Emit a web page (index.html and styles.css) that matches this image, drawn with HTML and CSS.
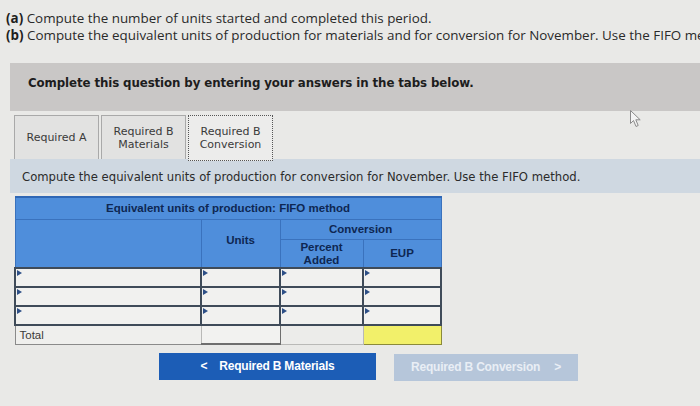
FILE: index.html
```html
<!DOCTYPE html>
<html>
<head>
<meta charset="utf-8">
<link rel="stylesheet" href="styles.css">
</head>
<body>
<div class="intro">
  <p><b>(a)</b> Compute the number of units started and completed this period.</p>
  <p><b>(b)</b> Compute the equivalent units of production for materials and for conversion for November. Use the FIFO method.</p>
</div>
<div class="panel">
  <div class="banner">Complete this question by entering your answers in the tabs below.</div>
  <div class="tabs">
    <div class="tab">Required A</div>
    <div class="tab">Required B<br>Materials</div>
    <div class="tab active">Required B<br>Conversion</div>
    <svg class="cursor" width="14" height="19" viewBox="0 0 14 19"><path d="M1.5 1.5 L1.5 14.5 L4.5 11.5 L7 17.5 L9.2 16.5 L6.8 10.8 L11.2 10.8 Z" fill="#f4f4f4" stroke="#8a8a8a" stroke-width="1"/></svg>
  </div>
  <div class="instr">Compute the equivalent units of production for conversion for November. Use the FIFO method.</div>
  <table class="eup">
    <colgroup><col class="c1"><col class="c2"><col class="c3"><col class="c4"></colgroup>
    <tr class="h1"><th colspan="4">Equivalent units of production: FIFO method</th></tr>
    <tr class="h2"><th rowspan="2"></th><th rowspan="2" class="units">Units</th><th colspan="2">Conversion</th></tr>
    <tr class="h3"><th>Percent<br>Added</th><th>EUP</th></tr>
    <tr class="row"><td class="in"></td><td class="in"></td><td class="in"></td><td class="in"></td></tr>
    <tr class="row"><td class="in"></td><td class="in"></td><td class="in"></td><td class="in"></td></tr>
    <tr class="row"><td class="in"></td><td class="in"></td><td class="in"></td><td class="in"></td></tr>
    <tr class="total"><td class="lbl">Total</td><td class="tu"></td><td class="tp"></td><td class="ty"></td></tr>
  </table>
  <div class="nav">
    <div class="btn prev"><span class="chev">&lt;</span>Required B Materials</div>
    <div class="btn next">Required B Conversion<span class="chev">&gt;</span></div>
  </div>
</div>
</body>
</html>
```

FILE: styles.css
```css
html, body { margin: 0; padding: 0; }
body {
  background: #e9e9e7;
  width: 700px;
  height: 406px;
  overflow: hidden;
  font-family: "Open Sans", "DejaVu Sans", sans-serif;
}
.intro { padding: 10px 0 0 6px; overflow: hidden; }
.intro p {
  margin: 0;
  font-size: 13.4px;
  line-height: 17px;
  color: #2a2a2a;
  white-space: nowrap;
}
.intro b { font-weight: 700; color: #1e1e1e; }
.panel { margin: 19px 0 0 10px; }
.banner {
  background: #c9c7c6;
  height: 48px;
  line-height: 40px;
  padding-left: 18px;
  font-family: "DejaVu Sans", sans-serif;
  font-weight: bold;
  font-size: 11.8px;
  color: #1d1d1d;
  letter-spacing: -0.1px;
}
.tabs {
  position: relative;
  display: flex;
  gap: 2px;
  padding: 4px 0 0 4px;
  height: 44px;
}
.tab {
  width: 83px;
  height: 43px;
  border: 1px solid #a9a9a9;
  border-bottom: none;
  background: #e2e2e1;
  display: flex;
  align-items: center;
  justify-content: center;
  text-align: center;
  font-family: "DejaVu Sans", sans-serif;
  font-size: 11px;
  line-height: 13px;
  color: #3a3a3a;
}
.tab.active {
  background: #ececeb;
  border: 1px dotted #555;
  height: 44px;
  position: relative;
  z-index: 1;
}
.cursor { position: absolute; left: 619px; top: -2px; }
.instr {
  background: #cfd8e1;
  height: 34px;
  line-height: 36px;
  padding-left: 12px;
  font-family: "DejaVu Sans", sans-serif;
  font-size: 11.65px;
  color: #2b2b2b;
}
.eup {
  border-collapse: collapse;
  margin: 3px 0 0 4px;
  table-layout: fixed;
  width: 426px;
  font-family: "Liberation Sans", Arial, sans-serif;
}
.c1 { width: 186px; }
.c2 { width: 79px; }
.c3 { width: 83px; }
.c4 { width: 78px; }
.eup th {
  background: #4f8edb;
  border: 1px solid #3a72bd;
  color: #0e2752;
  font-weight: bold;
  font-size: 11.5px;
  padding: 0;
  line-height: 13px;
}
.h1 th { height: 21px; border-top: 2px solid #2f67b5; }
.h2 th { height: 19px; }
.h3 th { height: 27px; }
.h2 th.units { vertical-align: middle; padding-bottom: 6px; }
.row td {
  height: 17px;
  background: #f1f1ef;
  border: 2px solid #3f4b59;
  padding: 0;
  position: relative;
}
.row td.in::before {
  content: "";
  position: absolute;
  left: 1px;
  top: 1px;
  border-left: 5px solid #2d4f86;
  border-top: 3px solid transparent;
  border-bottom: 3px solid transparent;
}
.total td {
  height: 17px;
  padding: 0;
  border: 1px solid #b9b9b7;
  background: #efefed;
}
.total .lbl {
  font-size: 11.5px;
  color: #3a3a3a;
  padding-left: 4px;
  line-height: 16px;
  border-left: 1px solid #8a8a8a;
  border-bottom: 1px solid #8a8a8a;
}
.total .tu { border: 1px solid #6e6e6e; border-bottom: 2px solid #6e6e6e; background: #f2f2f0; }
.total .tp { background: #ececea; }
.total .ty { background: #f2f06a; border: 1px solid #8b8a3a; }
.nav {
  display: flex;
  gap: 18px;
  margin: 8px 0 0 149px;
}
.btn {
  height: 27px;
  line-height: 27px;
  font-family: "Liberation Sans", Arial, sans-serif;
  font-weight: bold;
  font-size: 12px;
  text-align: center;
  letter-spacing: -0.2px;
}
.prev {
  width: 217px;
  background: #1c5db6;
  color: #ffffff;
}
.prev .chev { margin-right: 12px; }
.next {
  width: 184px;
  background: #b6c6da;
  color: #e9eef5;
  margin-top: 1px;
}
.next .chev { margin-left: 14px; }
```
